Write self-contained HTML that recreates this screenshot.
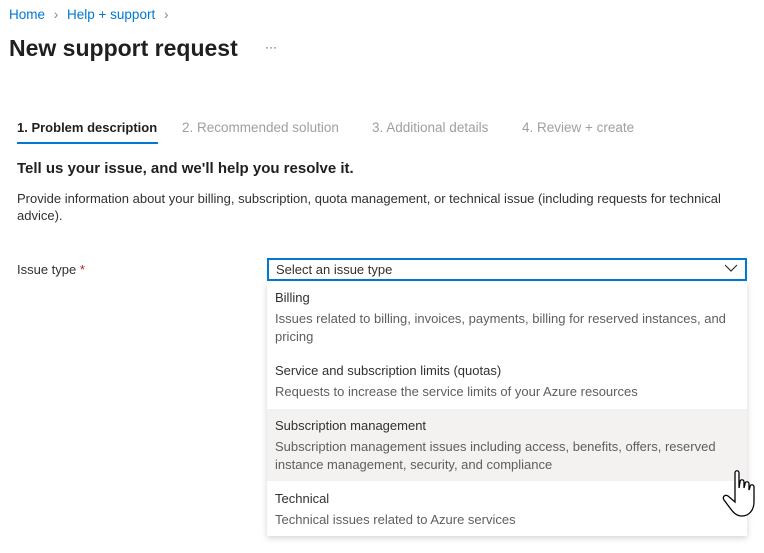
<!DOCTYPE html>
<html><head><style>
*{margin:0;padding:0;box-sizing:border-box}
body{width:764px;height:553px;background:#fff;font-family:"Liberation Sans",sans-serif;color:#323130;position:relative;overflow:hidden;font-size:12.8px}
.a{position:absolute;white-space:nowrap}
.bc{color:#0078d4;font-size:13.5px}
.g{color:#a19f9d;font-size:13.5px}
.d{color:#605e5c}
</style></head><body>
<div class="a bc" style="left:9px;top:7px">Home <span style="color:#8a8886;margin:0 5px">&#8250;</span> Help + support <span style="color:#8a8886;margin-left:5px">&#8250;</span></div>
<div class="a" style="left:9px;top:35px;font-size:23px;font-weight:600;color:#201f1e">New support request</div>
<div class="a" style="left:265px;top:40px;font-size:12px;color:#555">···</div>
<div class="a" style="left:17px;top:120px;font-size:13px;font-weight:bold;color:#201f1e">1. Problem description</div>
<div class="a" style="left:17px;top:142px;width:141px;height:2px;background:#0078d4"></div>
<div class="a g" style="left:182px;top:120px">2. Recommended solution</div>
<div class="a g" style="left:372px;top:120px">3. Additional details</div>
<div class="a g" style="left:522px;top:120px">4. Review + create</div>
<div class="a" style="left:17px;top:160px;font-size:15px;font-weight:bold;color:#201f1e">Tell us your issue, and we'll help you resolve it.</div>
<div class="a" style="left:17px;top:190px;line-height:17px;white-space:normal;width:730px;font-size:13px">Provide information about your billing, subscription, quota management, or technical issue (including requests for technical advice).</div>
<div class="a" style="left:17px;top:262px;font-size:13px">Issue type <span style="color:#a4262c">*</span></div>
<div class="a" style="left:267px;top:258px;width:480px;height:23px;border:1px solid #0078d4;box-shadow:0 0 0 1px #0078d4 inset"></div>
<div class="a" style="left:276px;top:262px;font-size:13px">Select an issue type</div>
<svg class="a" style="left:724px;top:263px" width="14" height="10"><path d="M1 2 L7 8 L13 2" stroke="#323130" fill="none" stroke-width="1.2"/></svg>
<div class="a" style="left:267px;top:282px;width:480px;height:254px;background:#fff;box-shadow:0 2px 6px rgba(0,0,0,.18)"></div>
<div class="a" style="left:267px;top:409px;width:480px;height:72px;background:#f3f2f1"></div>
<div style="font-size:13px">
<div class="a" style="left:275px;top:290px">Billing</div>
<div class="a d" style="left:275px;top:311px">Issues related to billing, invoices, payments, billing for reserved instances, and</div>
<div class="a d" style="left:275px;top:329px">pricing</div>
<div class="a" style="left:275px;top:363px">Service and subscription limits (quotas)</div>
<div class="a d" style="left:275px;top:384px">Requests to increase the service limits of your Azure resources</div>
<div class="a" style="left:275px;top:418px">Subscription management</div>
<div class="a d" style="left:275px;top:439px">Subscription management issues including access, benefits, offers, reserved</div>
<div class="a d" style="left:275px;top:457px">instance management, security, and compliance</div>
<div class="a" style="left:275px;top:491px">Technical</div>
<div class="a d" style="left:275px;top:512px">Technical issues related to Azure services</div>
</div>
<svg class="a" style="left:722px;top:470px" width="40" height="50"><path d="M13 3 C13 0 17 0 17 3 L17 18 L18 12 C18 9 22 9 22 12 L22 18 L23 14 C23 11 27 11 27 14 L27 20 L28 17 C28 14 32 14 32 17 L32 32 C32 40 27 46 20 46 C14 46 11 42 8 38 L2 30 C0 27 3 24 6 26 L13 32 Z" fill="#fff" stroke="#000" stroke-width="1.3"/></svg>
</body></html>
